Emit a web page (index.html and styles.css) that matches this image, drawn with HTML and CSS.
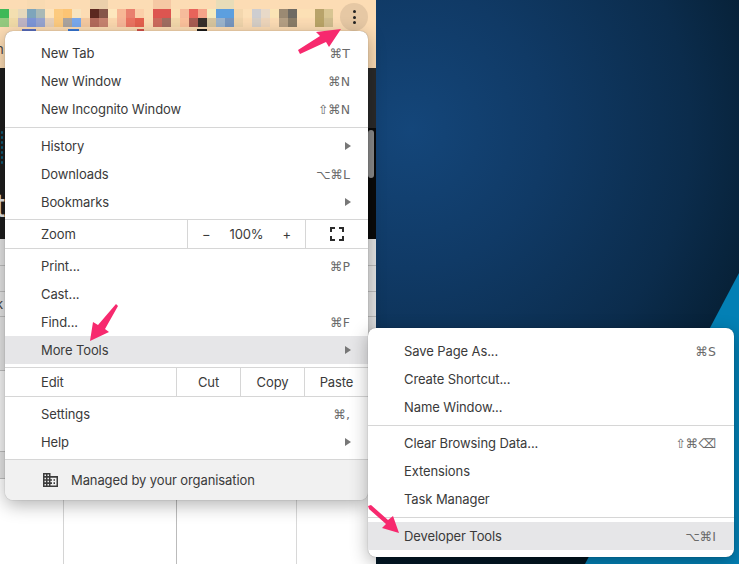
FILE: index.html
```html
<!DOCTYPE html>
<html lang="en">
  <head>
    <meta charset="UTF-8" />
    <meta name="viewport" content="width=device-width, initial-scale=1.0" />
    <title>Chrome menu - Developer Tools</title>
    <link rel="stylesheet" href="styles.css">
  </head>
  <body>
    <div class="screen">
      <div class="browser">
        <div class="toolbar">
          <svg class="blur-strip" width="333" height="32" viewBox="0 0 333 32" shape-rendering="crispEdges">
            <!-- top row, faint -->
            <rect x="27" y="0" width="18" height="9" fill="#f8dab2"/>
            <rect x="90" y="0" width="18" height="9" fill="#eacfab"/>
            <rect x="153" y="0" width="18" height="9" fill="#f5c8a4"/>
            <rect x="216" y="0" width="18" height="9" fill="#e8dcb8"/>
            <!-- row 1 -->
            <rect x="0" y="9" width="9" height="9" fill="#3fb957"/>
            <rect x="9" y="9" width="9" height="9" fill="#f3dfb0"/>
            <rect x="18" y="9" width="9" height="9" fill="#e5d8bc"/>
            <rect x="27" y="9" width="9" height="9" fill="#7ea5bb"/>
            <rect x="36" y="9" width="9" height="9" fill="#a9b9b6"/>
            <rect x="45" y="9" width="9" height="9" fill="#fde3bb"/>
            <rect x="54" y="9" width="9" height="9" fill="#fcca7f"/>
            <rect x="63" y="9" width="9" height="9" fill="#fcc474"/>
            <rect x="72" y="9" width="9" height="9" fill="#f8e4bf"/>
            <rect x="90" y="9" width="9" height="9" fill="#5b2820"/>
            <rect x="99" y="9" width="9" height="9" fill="#86564a"/>
            <rect x="108" y="9" width="9" height="9" fill="#fde7bd"/>
            <rect x="117" y="9" width="9" height="9" fill="#f7b795"/>
            <rect x="126" y="9" width="9" height="9" fill="#e9806e"/>
            <rect x="135" y="9" width="9" height="9" fill="#fbcfa9"/>
            <rect x="153" y="9" width="9" height="9" fill="#dd5550"/>
            <rect x="162" y="9" width="9" height="9" fill="#dd5550"/>
            <rect x="171" y="9" width="9" height="9" fill="#fbe0b5"/>
            <rect x="180" y="9" width="9" height="9" fill="#f6bb9b"/>
            <rect x="189" y="9" width="9" height="9" fill="#e8635a"/>
            <rect x="198" y="9" width="9" height="9" fill="#f5a489"/>
            <rect x="207" y="9" width="9" height="9" fill="#f4ebbd"/>
            <rect x="216" y="9" width="18" height="9" fill="#5c9fdf"/>
            <rect x="234" y="9" width="9" height="9" fill="#f3d7ae"/>
            <rect x="243" y="9" width="9" height="9" fill="#fce0b8"/>
            <rect x="252" y="9" width="9" height="9" fill="#cdcdd0"/>
            <rect x="261" y="9" width="9" height="9" fill="#e8d9c8"/>
            <rect x="270" y="9" width="9" height="9" fill="#fbe4b5"/>
            <rect x="279" y="9" width="9" height="9" fill="#9b8a73"/>
            <rect x="288" y="9" width="9" height="9" fill="#6e6a63"/>
            <rect x="297" y="9" width="18" height="9" fill="#fce0b5"/>
            <rect x="315" y="9" width="9" height="9" fill="#b8a36a"/>
            <rect x="324" y="9" width="9" height="9" fill="#d8c592"/>
            <!-- row 2 -->
            <rect x="0" y="18" width="9" height="9" fill="#93c97e"/>
            <rect x="9" y="18" width="9" height="9" fill="#f0daa7"/>
            <rect x="18" y="18" width="9" height="9" fill="#bfb4c4"/>
            <rect x="27" y="18" width="9" height="9" fill="#7d95d6"/>
            <rect x="36" y="18" width="9" height="9" fill="#96a3cf"/>
            <rect x="45" y="18" width="9" height="9" fill="#e5cfb9"/>
            <rect x="54" y="18" width="9" height="9" fill="#fcca7f"/>
            <rect x="63" y="18" width="9" height="9" fill="#aba49f"/>
            <rect x="72" y="18" width="9" height="9" fill="#79a8ec"/>
            <rect x="81" y="18" width="9" height="9" fill="#f4c9a0"/>
            <rect x="90" y="18" width="9" height="9" fill="#b26a5b"/>
            <rect x="99" y="18" width="9" height="9" fill="#c6826f"/>
            <rect x="108" y="18" width="9" height="9" fill="#fbd8ae"/>
            <rect x="117" y="18" width="9" height="9" fill="#f6b597"/>
            <rect x="126" y="18" width="9" height="9" fill="#ea7361"/>
            <rect x="135" y="18" width="9" height="9" fill="#e4604e"/>
            <rect x="153" y="18" width="9" height="9" fill="#cc6a5d"/>
            <rect x="162" y="18" width="9" height="9" fill="#a06e62"/>
            <rect x="171" y="18" width="9" height="9" fill="#f3d8ab"/>
            <rect x="180" y="18" width="9" height="9" fill="#fbc09b"/>
            <rect x="189" y="18" width="9" height="9" fill="#a85c52"/>
            <rect x="198" y="18" width="9" height="9" fill="#38302c"/>
            <rect x="207" y="18" width="9" height="9" fill="#d7c59e"/>
            <rect x="216" y="18" width="9" height="9" fill="#9cb4cc"/>
            <rect x="225" y="18" width="9" height="9" fill="#7796bf"/>
            <rect x="234" y="18" width="9" height="9" fill="#efd4ab"/>
            <rect x="252" y="18" width="9" height="9" fill="#d5cec6"/>
            <rect x="261" y="18" width="9" height="9" fill="#edd5bb"/>
            <rect x="279" y="18" width="9" height="9" fill="#b49f84"/>
            <rect x="288" y="18" width="9" height="9" fill="#897c68"/>
            <rect x="315" y="18" width="9" height="9" fill="#b9a467"/>
            <rect x="324" y="18" width="9" height="9" fill="#d0bd8e"/>
            <!-- bits showing above the menu -->
            <rect x="22" y="29" width="14" height="3" fill="#5b6fc0"/>
            <rect x="68" y="29" width="11" height="3" fill="#3878d8"/>
            <rect x="137" y="29" width="7" height="3" fill="#d8524a"/>
            <rect x="197" y="29" width="10" height="3" fill="#1c1a1a"/>
          </svg>
          <button class="kebab" aria-label="Customize and control">
            <span class="kebab-dot"></span>
            <span class="kebab-dot"></span>
            <span class="kebab-dot"></span>
          </button>
          <span class="edge-glyph nav-glyph">n</span>
        </div>
        <div class="hero">
          <span class="hero-dots"></span>
          <span class="hero-word">t</span>
          <div class="scroll-track"><span class="scroll-thumb"></span></div>
        </div>
        <div class="sheet">
          <div class="sheet-row grey h27"></div>
          <div class="sheet-row grey h26"></div>
          <div class="sheet-row grey h25"><span class="edge-glyph row-glyph">k</span></div>
          <div class="sheet-row grey h54"></div>
          <div class="sheet-row pale h81"></div>
          <div class="sheet-row grey h27"></div>
          <div class="sheet-grid">
            <span class="sheet-cell c1"></span>
            <span class="sheet-cell c2"></span>
            <span class="sheet-cell c3"></span>
          </div>
        </div>
      </div>
      <div class="desktop"><div class="wedge"></div></div>

      <div class="menu main-menu">
        <div class="item"><span>New Tab</span><span class="keys">⌘T</span></div>
        <div class="item"><span>New Window</span><span class="keys">⌘N</span></div>
        <div class="item"><span>New Incognito Window</span><span class="keys">⇧⌘N</span></div>
        <div class="sep"></div>
        <div class="item"><span>History</span><span class="more"></span></div>
        <div class="item"><span>Downloads</span><span class="keys">⌥⌘L</span></div>
        <div class="item"><span>Bookmarks</span><span class="more"></span></div>
        <div class="zoom-row">
          <span class="zoom-label">Zoom</span>
          <div class="zoom-ctl"><span>−</span><span>100%</span><span>+</span></div>
          <div class="zoom-full">
            <svg width="14" height="14" viewBox="0 0 14 14" fill="none" stroke="#2b2b2b" stroke-width="2">
              <path d="M1 5V1H5M9 1H13V5M13 9V13H9M5 13H1V9"/>
            </svg>
          </div>
        </div>
        <div class="item"><span>Print...</span><span class="keys">⌘P</span></div>
        <div class="item"><span>Cast...</span></div>
        <div class="item"><span>Find...</span><span class="keys">⌘F</span></div>
        <div class="item active"><span>More Tools</span><span class="more"></span></div>
        <div class="edit-row">
          <span class="edit-label">Edit</span>
          <span class="edit-btn">Cut</span>
          <span class="edit-btn">Copy</span>
          <span class="edit-btn">Paste</span>
        </div>
        <div class="item"><span>Settings</span><span class="keys">⌘,</span></div>
        <div class="item"><span>Help</span><span class="more"></span></div>
        <div class="managed">
          <svg width="15" height="14" viewBox="2 3 20 18" preserveAspectRatio="none" fill="#3c3c3c">
            <path d="M12 7V3H2v18h20V7H12zM6 19H4v-2h2v2zm0-4H4v-2h2v2zm0-4H4V9h2v2zm0-4H4V5h2v2zm4 12H8v-2h2v2zm0-4H8v-2h2v2zm0-4H8V9h2v2zm0-4H8V5h2v2zm10 12h-8v-2h2v-2h-2v-2h2v-2h-2V9h8v10zm-2-8h-2v2h2v-2zm0 4h-2v2h2v-2z"/>
          </svg>
          <span>Managed by your organisation</span>
        </div>
      </div>

      <div class="menu sub-menu">
        <div class="item"><span>Save Page As...</span><span class="keys">⌘S</span></div>
        <div class="item"><span>Create Shortcut...</span></div>
        <div class="item"><span>Name Window...</span></div>
        <div class="sep tight"></div>
        <div class="item"><span>Clear Browsing Data...</span><span class="keys">⇧⌘⌫</span></div>
        <div class="item"><span>Extensions</span></div>
        <div class="item"><span>Task Manager</span></div>
        <div class="sep"></div>
        <div class="item active"><span>Developer Tools</span><span class="keys">⌥⌘I</span></div>
      </div>

      <svg class="arrows" width="739" height="564" viewBox="0 0 739 564" fill="#f7296e">
        <polygon points="298,50 320,36 316,32 341,29 329,47 326,42 300,54"/>
        <polygon points="116,304 118,306 105,329 109,332 90,341 93,322 98,325"/>
        <polygon points="368,506 371,505 388,520 393,516 399,533 382,528 386,524 369,509"/>
      </svg>
    </div>
  </body>
</html>
```

FILE: styles.css
```css
* {
  box-sizing: border-box;
}
body {
  margin: 0;
  font-family: "Inter", "Liberation Sans", sans-serif;
  background: #fff;
}
.screen {
  position: relative;
  display: flex;
  width: 739px;
  height: 564px;
  overflow: hidden;
}

/* page behind the menus */
.browser {
  width: 376px;
  display: flex;
  flex-direction: column;
}
.toolbar {
  position: relative;
  height: 68px;
  display: flex;
  justify-content: space-between;
  align-items: flex-start;
  padding: 0 8px 0 0;
  background: #fcdcb4;
  flex-shrink: 0;
}
.blur-strip {
  display: block;
  filter: blur(0.5px);
}
.kebab {
  width: 28px;
  height: 28px;
  margin-top: 3px;
  padding: 0;
  border: none;
  border-radius: 50%;
  background: #e6c8a4;
  display: flex;
  flex-direction: column;
  align-items: center;
  justify-content: center;
  gap: 2.5px;
}
.kebab-dot {
  width: 3px;
  height: 3px;
  border-radius: 50%;
  background: #222;
}
.edge-glyph {
  position: absolute;
  color: #444;
  font-size: 13px;
  line-height: 14px;
}
.nav-glyph {
  left: -4px;
  top: 42px;
}
.row-glyph {
  left: -4px;
  top: 60px;
}
.hero {
  position: relative;
  height: 171px;
  flex-shrink: 0;
  overflow: hidden;
  background: #1e1e1e;
}
.hero-dots {
  position: absolute;
  left: 0;
  top: 62px;
  width: 5px;
  height: 36px;
  background-image: radial-gradient(circle, #0d5c78 1px, transparent 1.5px);
  background-size: 4px 5px;
}
.hero-word {
  position: absolute;
  left: -5px;
  top: 120px;
  color: #e4e4e4;
  font-size: 32px;
  line-height: 36px;
}
.scroll-track {
  position: absolute;
  right: 0;
  top: 0;
  width: 8px;
  height: 100%;
  padding-top: 62px;
  background: linear-gradient(to bottom, #2a2a2a 0, #2a2a2a 60px, #0a0a0a 60px);
}
.scroll-thumb {
  display: block;
  width: 6px;
  height: 48px;
  border-radius: 3px;
  background: #8a8a8a;
}
.sheet {
  flex: 1;
  display: flex;
  flex-direction: column;
  background: #fff;
}
.sheet-row {
  position: relative;
  border-bottom: 1px solid #bdbdbd;
  flex-shrink: 0;
}
.row-glyph {
  top: 5px;
}
.grey {
  background: #e4e4e4;
}
.pale {
  background: #f4f4f4;
}
.h25 {
  height: 25px;
}
.h26 {
  height: 26px;
}
.h27 {
  height: 27px;
}
.h54 {
  height: 54px;
}
.h81 {
  height: 81px;
}
.sheet-grid {
  flex: 1;
  display: flex;
  padding-left: 63px;
}
.sheet-cell {
  border-left: 1px solid #c8c8c8;
}
.c1 {
  width: 113px;
  border-left-color: #d4d4d4;
}
.c2 {
  width: 120px;
  border-left-color: #bbb;
}
.c3 {
  width: 80px;
  border-left-color: #d8d8d8;
}

.desktop {
  position: relative;
  flex: 1;
  background:
    radial-gradient(ellipse 450px 460px at 35px 130px, #14467a 0, #103a66 30%, #0b2c4c 62%, rgba(6, 28, 46, 0) 100%),
    #02141f;
}
.wedge {
  position: absolute;
  inset: 0;
  background: #0380b5;
  clip-path: polygon(363px 273px, 363px 564px, 209px 564px);
}

/* chrome menus */
.menu {
  position: absolute;
  display: flex;
  flex-direction: column;
  background: #fff;
  color: #3a3a3a;
  font-size: 13px;
  letter-spacing: -0.1px;
  border-radius: 8px;
  overflow: hidden;
  box-shadow: 0 0 1px rgba(0, 0, 0, 0.45), 0 5px 18px rgba(0, 0, 0, 0.3);
}
.main-menu {
  left: 5px;
  top: 31px;
  width: 363px;
  height: 469px;
  padding-top: 8px;
}
.sub-menu {
  left: 368px;
  top: 328px;
  width: 366px;
  height: 229px;
  padding-top: 9px;
}
.item {
  height: 28px;
  flex-shrink: 0;
  display: flex;
  align-items: center;
  justify-content: space-between;
  padding: 0 18px 0 36px;
}
.item.active {
  background: #e6e6e8;
}
.keys {
  color: #6a6a6a;
  font-family: "DejaVu Sans", sans-serif;
  font-size: 12.5px;
  letter-spacing: 0;
}
.more {
  width: 0;
  height: 0;
  margin-right: -1px;
  border-left: 6px solid #777;
  border-top: 4px solid transparent;
  border-bottom: 4px solid transparent;
}
.sep {
  height: 1px;
  margin: 4px 0;
  flex-shrink: 0;
  background: #d6d6d6;
}
.sep.tight {
  margin-bottom: 3px;
}
.zoom-row,
.edit-row {
  display: flex;
  flex-shrink: 0;
  align-items: stretch;
  height: 30px;
  margin: 3px 0;
  border-top: 1px solid #d6d6d6;
  border-bottom: 1px solid #d6d6d6;
}
.zoom-label {
  width: 182px;
  padding-left: 36px;
  line-height: 28px;
}
.zoom-ctl {
  width: 119px;
  padding: 0 14px;
  display: flex;
  justify-content: space-between;
  align-items: center;
  border-left: 1px solid #d6d6d6;
  border-right: 1px solid #d6d6d6;
}
.zoom-full {
  flex: 1;
  display: flex;
  align-items: center;
  justify-content: center;
}
.edit-label {
  width: 171px;
  padding-left: 36px;
  line-height: 28px;
}
.edit-btn {
  width: 64px;
  line-height: 28px;
  text-align: center;
  border-left: 1px solid #d6d6d6;
}
.managed {
  margin-top: auto;
  height: 41px;
  display: flex;
  align-items: center;
  gap: 13px;
  padding-left: 38px;
  background: #f1f1f1;
  border-top: 1px solid #d6d6d6;
}

.arrows {
  position: absolute;
  left: 0;
  top: 0;
  pointer-events: none;
}
```
